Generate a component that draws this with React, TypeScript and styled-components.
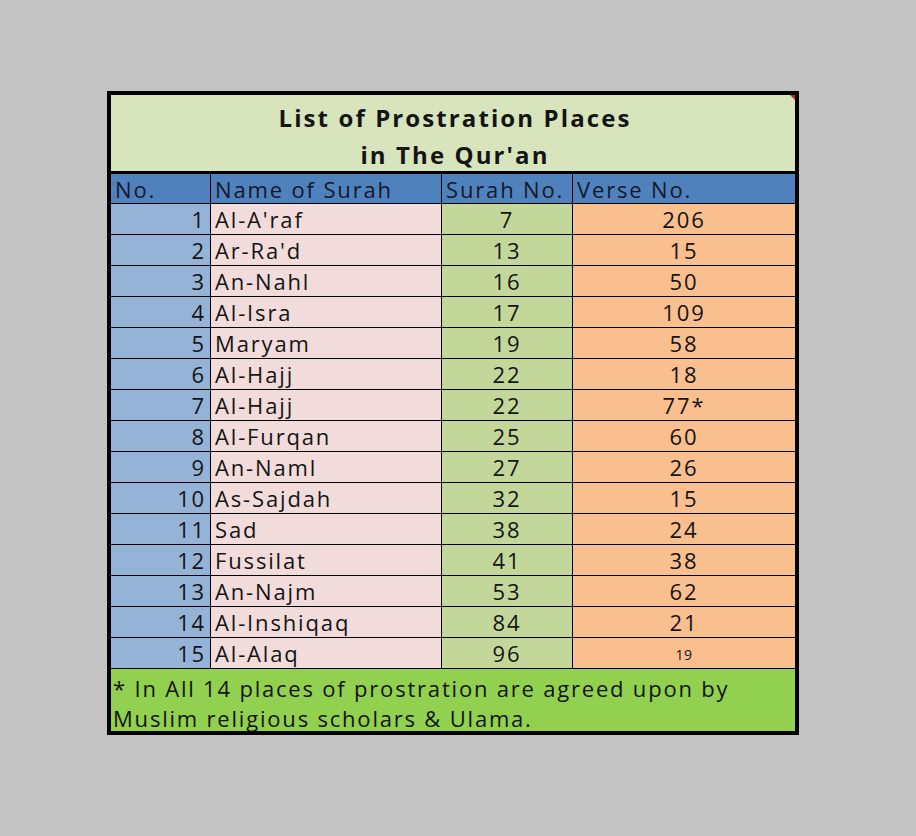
import React from "react";
import styled, { createGlobalStyle } from "styled-components";

const GlobalStyle = createGlobalStyle`
    *, *::before, *::after {
        box-sizing: border-box;
    }
    html, body {
        margin: 0;
        padding: 0;
        background: #c3c3c3;
    }
    body {
        width: 916px;
        height: 836px;
        overflow: hidden;
        font-family: "Open Sans", "Noto Sans", sans-serif;
    }
`;

const Page = styled.div`
    padding-top: 91px;
    padding-left: 107px;
`;

const Sheet = styled.div`
    position: relative;
    width: 692px;
    border: 4px solid #000;
    background: #000;
    display: grid;
    grid-template-columns: 99px 230px 130px 222px;
    column-gap: 1px;
    row-gap: 1px;
    color: #141414;
`;

const CornerMark = styled.div`
    position: absolute;
    top: 0;
    right: 0;
    width: 0;
    height: 0;
    border-top: 5px solid #c0282a;
    border-left: 5px solid transparent;
`;

const Title = styled.div`
    grid-column: 1 / -1;
    height: 78px;
    border-bottom: 2px solid #000;
    background: #d8e4bc;
    display: flex;
    flex-direction: column;
    align-items: center;
    justify-content: center;
    padding: 6px 0 0 4px;
    font-weight: 700;
    font-size: 24px;
    letter-spacing: 2.1px;
    line-height: 37px;
`;

const HeadCell = styled.div`
    height: 29px;
    background: #4f81bd;
    display: flex;
    align-items: center;
    padding-left: 4px;
    font-size: 22px;
    letter-spacing: 1.85px;
    color: #13182a;
    white-space: nowrap;
`;

type Align = "left" | "center" | "right";

const Cell = styled.div<{ $bg: string; $align: Align; $small?: boolean }>`
    height: 30px;
    background: ${p => p.$bg};
    display: flex;
    align-items: ${p => (p.$small ? "flex-end" : "center")};
    justify-content: ${p =>
        p.$align === "left" ? "flex-start" : p.$align === "right" ? "flex-end" : "center"};
    padding: ${p => (p.$small ? "0 0 4px 0" : "0 4px")};
    font-size: ${p => (p.$small ? "14px" : "22px")};
    letter-spacing: ${p => (p.$small ? "0.6px" : "1.85px")};
    white-space: nowrap;
`;

const Footer = styled.div`
    grid-column: 1 / -1;
    height: 62px;
    background: #92d050;
    padding: 4px 0 0 2px;
    font-size: 22px;
    letter-spacing: 1.8px;
    line-height: 30px;
    white-space: nowrap;
`;

const colors = {
    no: "#95b3d7",
    name: "#f2dcdb",
    surah: "#c4d79b",
    verse: "#fabf8f",
};

const rows: [number, string, number, string][] = [
    [1, "Al-A'raf", 7, "206"],
    [2, "Ar-Ra'd", 13, "15"],
    [3, "An-Nahl", 16, "50"],
    [4, "Al-Isra", 17, "109"],
    [5, "Maryam", 19, "58"],
    [6, "Al-Hajj", 22, "18"],
    [7, "Al-Hajj", 22, "77*"],
    [8, "Al-Furqan", 25, "60"],
    [9, "An-Naml", 27, "26"],
    [10, "As-Sajdah", 32, "15"],
    [11, "Sad", 38, "24"],
    [12, "Fussilat", 41, "38"],
    [13, "An-Najm", 53, "62"],
    [14, "Al-Inshiqaq", 84, "21"],
    [15, "Al-Alaq", 96, "19"],
];

export default function App() {
    return (
        <Page>
            <GlobalStyle />
            <Sheet>
                <CornerMark />
                <Title>
                    <span>List of Prostration Places</span>
                    <span>in The Qur'an</span>
                </Title>
                <HeadCell>No.</HeadCell>
                <HeadCell>Name of Surah</HeadCell>
                <HeadCell>Surah No.</HeadCell>
                <HeadCell>Verse No.</HeadCell>
                {rows.map(([no, name, surah, verse]) => (
                    <React.Fragment key={no}>
                        <Cell $bg={colors.no} $align="right">{no}</Cell>
                        <Cell $bg={colors.name} $align="left">{name}</Cell>
                        <Cell $bg={colors.surah} $align="center">{surah}</Cell>
                        <Cell $bg={colors.verse} $align="center" $small={no === 15}>{verse}</Cell>
                    </React.Fragment>
                ))}
                <Footer>
                    * In All 14 places of prostration are agreed upon by
                    <br />
                    Muslim religious scholars &amp; Ulama.
                </Footer>
            </Sheet>
        </Page>
    );
}
